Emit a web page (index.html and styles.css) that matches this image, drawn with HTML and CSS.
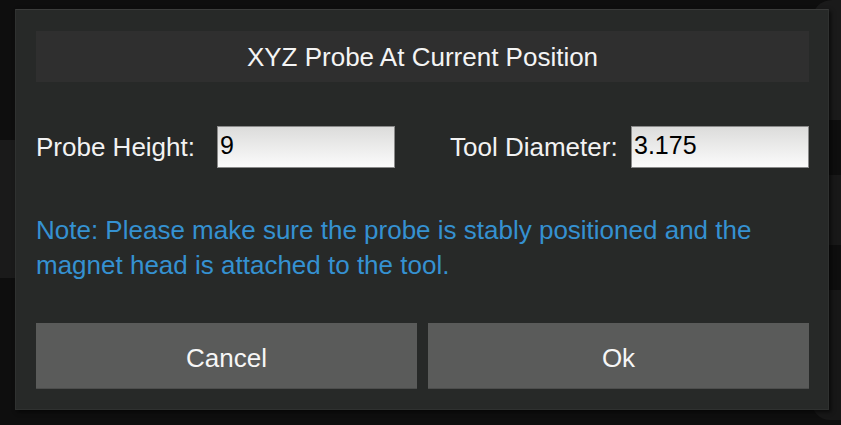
FILE: index.html
```html
<!DOCTYPE html>
<html>
<head>
<meta charset="utf-8">
<title>XYZ Probe At Current Position</title>
<link rel="stylesheet" href="styles.css">
</head>
<body>
<div class="backdrop">
  <div class="blob blob-left"></div>
  <div class="blob blob-r1"></div>
  <div class="blob blob-r2"></div>
  <div class="blob blob-r3"></div>
</div>
<div class="dialog">
  <div class="title-bar">XYZ Probe At Current Position</div>
  <div class="field-row">
    <label class="field-label" for="probe-height">Probe Height:</label>
    <input class="field-input" id="probe-height" type="text" value="9">
    <span class="spacer"></span>
    <label class="field-label" for="tool-diameter">Tool Diameter:</label>
    <input class="field-input" id="tool-diameter" type="text" value="3.175">
  </div>
  <p class="note">Note: Please make sure the probe is stably positioned and the magnet head is attached to the tool.</p>
  <div class="actions">
    <button class="btn" type="button">Cancel</button>
    <button class="btn" type="button">Ok</button>
  </div>
</div>
</body>
</html>
```
FILE: styles.css
```css
html, body {
  margin: 0;
  padding: 0;
  background: #0e0e0e;
  width: 841px;
  height: 425px;
  overflow: hidden;
  font-family: "Liberation Sans", Arial, sans-serif;
}

body {
  position: relative;
  padding-top: 9px;
  box-sizing: border-box;
}

.backdrop {
  position: absolute;
  inset: 0;
  z-index: 0;
  overflow: hidden;
}

.blob {
  position: absolute;
  background: #1a1a1a;
}

.blob-left {
  left: 0;
  top: 140px;
  width: 40px;
  height: 138px;
  border-radius: 0 0 0 0;
  clip-path: inset(0 round 0 0 0 0);
}

.blob-r1 {
  left: 812px;
  top: 0;
  width: 29px;
  height: 120px;
  border-radius: 20px 0 0 0;
}

.blob-r2 {
  left: 812px;
  top: 175px;
  width: 29px;
  height: 70px;
  background: #181818;
}

.blob-r3 {
  left: 812px;
  top: 290px;
  width: 29px;
  height: 130px;
  border-radius: 0 0 0 18px;
  background: #171717;
}

.dialog {
  position: relative;
  z-index: 1;
  margin-left: 15px;
  width: 814px;
  box-sizing: border-box;
  background: #272928;
  border: 1px solid #2f3130;
  border-top-color: #3b3c3b;
  padding: 21px 19px 20px 20px;
  box-shadow: 2px 2px 4px rgba(0, 0, 0, 0.6);
}

.title-bar {
  height: 51px;
  background: #2f2f2f;
  color: #f4f4f4;
  font-size: 26px;
  display: flex;
  align-items: center;
  justify-content: center;
  padding-top: 2px;
  box-sizing: border-box;
}

.field-row {
  margin-top: 44px;
  height: 42px;
  display: grid;
  grid-template-columns: 181px 178px 1fr 181px 178px;
  align-items: center;
}

.field-label {
  color: #f2f2f2;
  font-size: 26px;
  padding-top: 1px;
}

.field-input {
  height: 42px;
  box-sizing: border-box;
  border: 1px solid #8a8a8a;
  background: linear-gradient(#dcdcdb, #fbfbfb);
  font-family: "Liberation Sans", Arial, sans-serif;
  font-size: 25px;
  color: #000;
  padding: 0 2px 3px 2px;
  margin: 0;
  outline: none;
  width: 178px;
}

.note {
  margin: 45px 0 0 0;
  color: #3591d1;
  font-size: 26px;
  line-height: 35px;
}

.actions {
  margin-top: 40px;
  display: grid;
  grid-template-columns: 1fr 1fr;
  gap: 11px;
}

.btn {
  height: 66px;
  background: #5a5b5a;
  border: none;
  border-bottom: 1px solid #4c4d4c;
  color: #f6f6f6;
  font-family: "Liberation Sans", Arial, sans-serif;
  font-size: 26px;
  padding: 6px 0 0 0;
  margin: 0;
}
```
